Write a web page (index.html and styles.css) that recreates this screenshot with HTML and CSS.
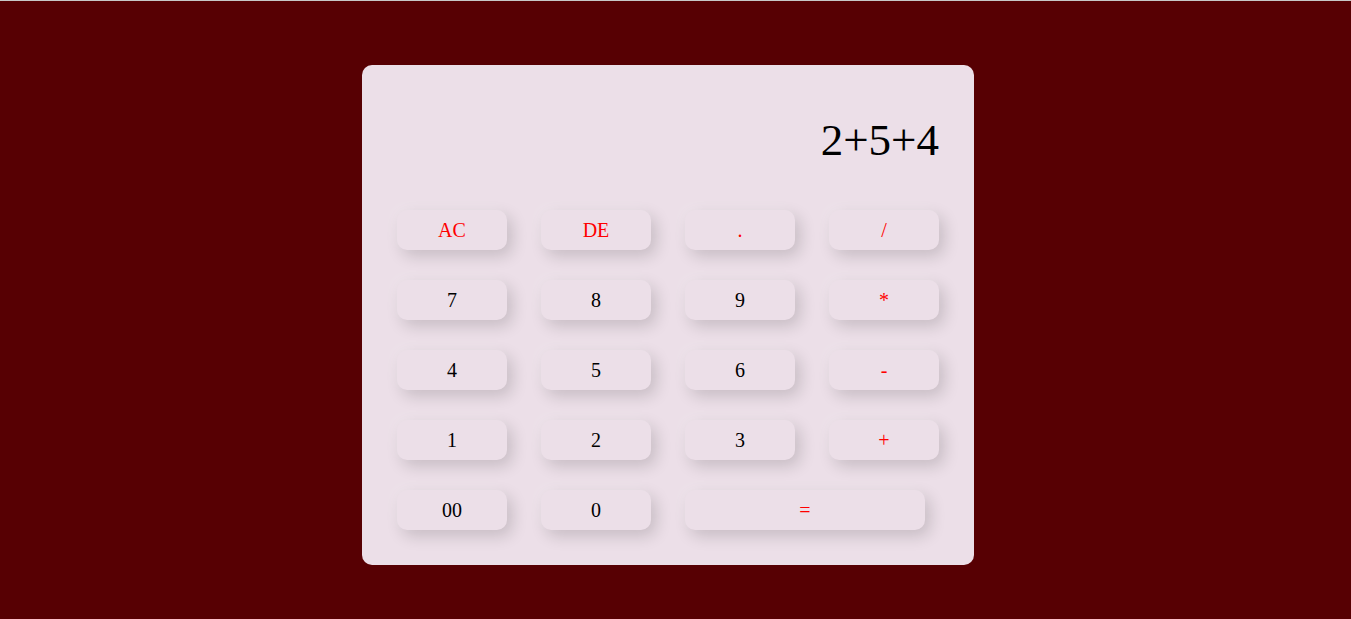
FILE: index.html
```html
<!DOCTYPE html>
<html lang="en">
<head>
  <meta charset="UTF-8">
  <meta name="viewport" content="width=device-width, initial-scale=1.0">
  <title>Calculator</title>
  <link rel="stylesheet" href="styles.css">
</head>
<body>
  <div class="calculator">
    <div class="display" id="display">2+5+4</div>
    <div class="keys">
      <button class="key op">AC</button>
      <button class="key op">DE</button>
      <button class="key op">.</button>
      <button class="key op">/</button>
      <button class="key">7</button>
      <button class="key">8</button>
      <button class="key">9</button>
      <button class="key op">*</button>
      <button class="key">4</button>
      <button class="key">5</button>
      <button class="key">6</button>
      <button class="key op">-</button>
      <button class="key">1</button>
      <button class="key">2</button>
      <button class="key">3</button>
      <button class="key op">+</button>
      <button class="key">00</button>
      <button class="key">0</button>
      <button class="key op equal">=</button>
    </div>
  </div>
</body>
</html>
```

FILE: styles.css
```css
html {
  border-top: 1px solid #c8c8c8;
}

body {
  font-family: "Liberation Serif", "Times New Roman", serif;
  margin: 0;
  padding: 64px 15px 0 0;
  min-height: 554px;
  box-sizing: border-box;
  display: flex;
  justify-content: center;
  align-items: flex-start;
  background-color: #570003;
}

.calculator {
  width: 612px;
  padding: 35px;
  box-sizing: border-box;
  border-radius: 10px;
  background-color: #ecdfe8;
}

.display {
  padding: 15px 0 45px;
  text-align: right;
  font-size: 45px;
  line-height: 50px;
  color: #000;
}

.keys {
  display: grid;
  grid-template-columns: repeat(4, 110px);
  grid-auto-rows: 40px;
  column-gap: 34px;
  row-gap: 30px;
}

.key {
  font-family: inherit;
  font-size: 20px;
  color: #000;
  border: none;
  border-radius: 10px;
  background-color: #ecdfe8;
  box-shadow: -4px -4px 12px rgba(255, 255, 255, 0.15), 5px 6px 16px rgba(0, 0, 0, 0.16);
  cursor: pointer;
  padding: 0;
}

.key.op {
  color: #ff0000;
}

.key.equal {
  grid-column: span 2;
  width: 240px;
}
```
